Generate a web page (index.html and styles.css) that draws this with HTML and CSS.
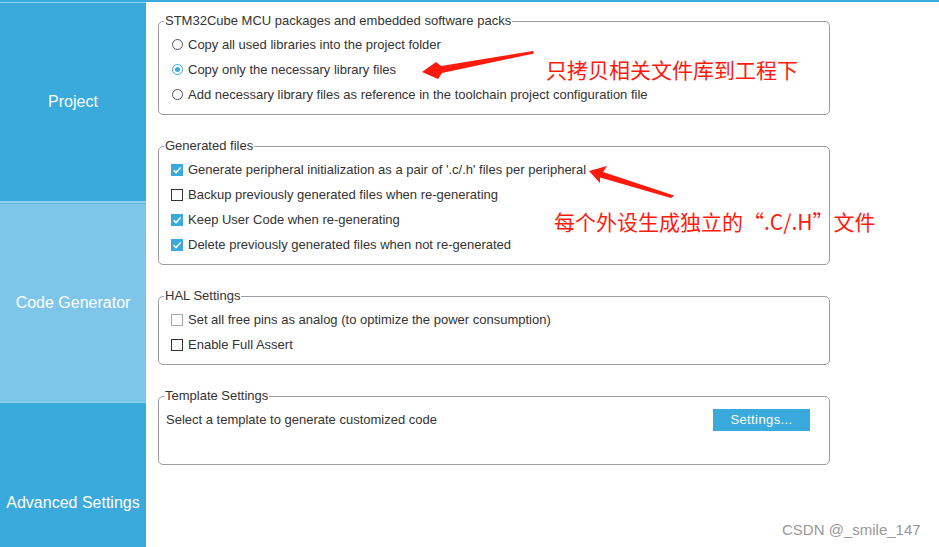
FILE: index.html
```html
<!DOCTYPE html>
<html lang="en">
<head>
<meta charset="utf-8">
<title>Project Manager - Code Generator</title>
<link rel="stylesheet" href="styles.css">
</head>
<body>
<div class="app">
  <nav class="sidebar">
    <div class="nav-item nav-project">Project</div>
    <div class="nav-item nav-active">Code Generator</div>
    <div class="nav-item">Advanced Settings</div>
  </nav>
  <main class="main">
    <fieldset class="group">
      <legend>STM32Cube MCU packages and embedded software packs</legend>
      <label class="row"><span class="radio"></span>Copy all used libraries into the project folder</label>
      <label class="row"><span class="radio radio-on"></span>Copy only the necessary library files</label>
      <label class="row"><span class="radio"></span>Add necessary library files as reference in the toolchain project configuration file</label>
    </fieldset>
    <fieldset class="group">
      <legend>Generated files</legend>
      <label class="row"><span class="check check-on"><svg viewBox="0 0 12 12" width="12" height="12"><path d="M2.6 6.2 L5 8.6 L9.6 3.4" fill="none" stroke="#fff" stroke-width="1.5"/></svg></span>Generate peripheral initialization as a pair of '.c/.h' files per peripheral</label>
      <label class="row"><span class="check"></span>Backup previously generated files when re-generating</label>
      <label class="row"><span class="check check-on"><svg viewBox="0 0 12 12" width="12" height="12"><path d="M2.6 6.2 L5 8.6 L9.6 3.4" fill="none" stroke="#fff" stroke-width="1.5"/></svg></span>Keep User Code when re-generating</label>
      <label class="row"><span class="check check-on"><svg viewBox="0 0 12 12" width="12" height="12"><path d="M2.6 6.2 L5 8.6 L9.6 3.4" fill="none" stroke="#fff" stroke-width="1.5"/></svg></span>Delete previously generated files when not re-generated</label>
    </fieldset>
    <fieldset class="group">
      <legend>HAL Settings</legend>
      <label class="row"><span class="check check-disabled"></span>Set all free pins as analog (to optimize the power consumption)</label>
      <label class="row"><span class="check"></span>Enable Full Assert</label>
    </fieldset>
    <fieldset class="group group-template">
      <legend>Template Settings</legend>
      <div class="template-row">
        <span>Select a template to generate customized code</span>
        <button class="btn" type="button">Settings...</button>
      </div>
    </fieldset>
  </main>

  <svg class="arrows" viewBox="0 0 939 547" width="939" height="547">
    <polygon points="533,51 534,53.5 442,73 438,79 422,72 436,62 441,66" fill="#ff1a0d"/>
    <polygon points="589,171 607,166 603,172 674,195.5 671,198 600,177.5 600,183" fill="#ff1a0d"/>
  </svg>
  <div class="note note-1">只拷贝相关文件库到工程下</div>
  <div class="note note-2">每个外设生成独立的“.C/.H”文件</div>
  <div class="watermark">CSDN @_smile_147</div>
</div>
</body>
</html>
```
FILE: styles.css
```css
html, body {
  margin: 0;
  padding: 0;
  background: #fff;
}
body {
  font-family: "Liberation Sans", Arial, sans-serif;
}
.app {
  position: relative;
  width: 939px;
  height: 547px;
  box-sizing: border-box;
  border-top: 2px solid #3aa9dc;
  display: flex;
  overflow: hidden;
}
.sidebar {
  width: 146px;
  flex: none;
  display: flex;
  flex-direction: column;
  background: #3aa9dc;
}
.nav-item {
  flex: none;
  height: 200px;
  box-sizing: border-box;
  border-top: 1px solid #8fd0ef;
  display: flex;
  align-items: center;
  justify-content: center;
  color: #fff;
  font-size: 16px;
  background: #3aa9dc;
}
.nav-project {
  height: 199px;
}
.nav-active {
  height: 201px;
  background: #7ec6e9;
  border-top: 2px solid #8fd0ef;
  box-shadow: inset 0 1px 0 #5fb9e3;
}
.main {
  flex: 1;
  padding: 12px 0 0 12px;
  display: flex;
  flex-direction: column;
  gap: 24px;
}
.group {
  margin: 0;
  width: 672px;
  box-sizing: border-box;
  min-width: 0;
  border: 1px solid #9a9ea3;
  border-radius: 5px;
  padding: 4px 19px 7px 7px;
  color: #333;
  font-size: 13px;
}
.group legend {
  padding: 0 1px;
  margin-left: -2px;
  line-height: 14px;
  font-size: 13px;
  color: #333;
}
.row {
  display: flex;
  align-items: center;
  height: 25px;
  padding-left: 5px;
  white-space: nowrap;
}
.radio {
  width: 11px;
  height: 11px;
  box-sizing: border-box;
  border: 1px solid #555;
  border-radius: 50%;
  margin: 0 5px 0 1px;
  display: inline-flex;
  align-items: center;
  justify-content: center;
  background: #fff;
}
.radio-on {
  border-color: #3aa9dc;
}
.radio-on::after {
  content: "";
  width: 5px;
  height: 5px;
  border-radius: 50%;
  background: #3aa9dc;
}
.check {
  width: 12px;
  height: 12px;
  box-sizing: border-box;
  border: 1px solid #333;
  margin-right: 5px;
  display: inline-block;
  background: #fff;
  position: relative;
}
.check svg {
  display: block;
  position: absolute;
  left: -1px;
  top: -1px;
}
.check-on {
  background: #3aa9dc;
  border-color: #3aa9dc;
}
.check-disabled {
  border-color: #a8a8a8;
}
.group-template {
  padding-bottom: 32px;
}
.template-row {
  display: flex;
  align-items: center;
  justify-content: space-between;
  height: 25px;
}
.btn {
  width: 97px;
  height: 22px;
  border: none;
  background: #3aa9dc;
  color: #fff;
  font-family: "Liberation Sans", Arial, sans-serif;
  font-size: 13px;
  letter-spacing: 0.4px;
  padding: 0;
}
.arrows {
  position: absolute;
  left: 0;
  top: -2px;
  pointer-events: none;
}
.note {
  position: absolute;
  color: #ff1a0d;
  font-family: "Noto Sans CJK SC", "Liberation Sans", sans-serif;
  font-size: 21px;
  line-height: 24px;
  white-space: nowrap;
}
.note-1 {
  left: 546px;
  top: 55px;
}
.note-2 {
  left: 554px;
  top: 207px;
}
.watermark {
  position: absolute;
  left: 782px;
  top: 519px;
  font-size: 15px;
  line-height: 18px;
  color: #999;
  text-shadow: 0 0 1px #fff;
  white-space: nowrap;
}
```
